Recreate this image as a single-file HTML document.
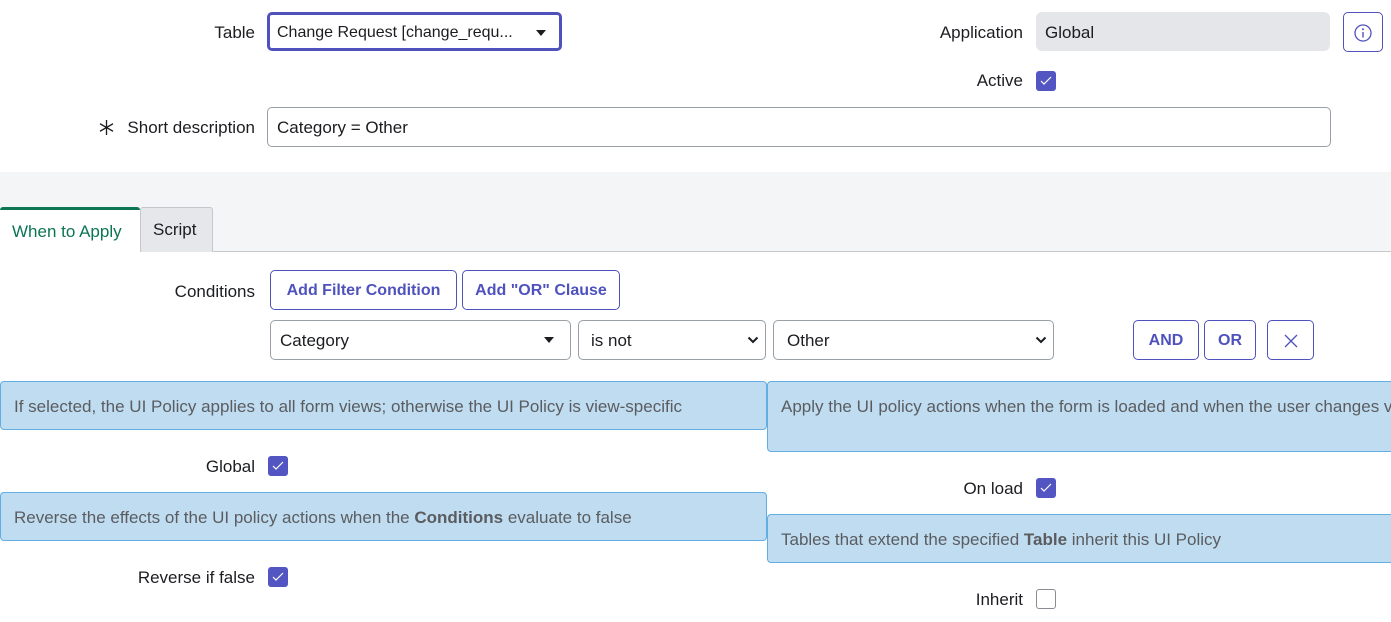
<!DOCTYPE html>
<html><head><meta charset="utf-8">
<style>
*{box-sizing:border-box;margin:0;padding:0}
html,body{width:1391px;height:622px;overflow:hidden;background:#fff;font-family:"Liberation Sans",sans-serif;font-size:17px;color:#1c1d21;letter-spacing:0}
.a{position:absolute}
.lbl{position:absolute;text-align:right;white-space:nowrap;line-height:20px}
.inp{position:absolute;border:1px solid #9aa0a8;border-radius:5px;background:#fff;padding-left:9px;padding-top:2px;display:flex;align-items:center;white-space:nowrap}
.btn{position:absolute;border:1px solid #4f52bd;border-radius:5px;color:#4f52bd;font-weight:bold;font-size:16px;display:flex;align-items:center;justify-content:center;background:#fff;padding-top:1px}
.cb{position:absolute;width:20px;height:20px;border-radius:3px;background:#5356c2}
.cb svg{position:absolute;left:4px;top:5px}
.info{position:absolute;background:#bfdcf0;border:1px solid #62aee3;border-radius:4px;color:#5a5c60;padding-left:13px;white-space:nowrap;overflow:hidden;line-height:20px}
.caret{position:absolute;width:0;height:0;border-left:5px solid transparent;border-right:5px solid transparent;border-top:6px solid #1c1d21}
</style></head><body>

<div class="lbl" style="right:1136px;top:23px">Table</div>
<div class="inp" style="left:267px;top:12px;width:295px;height:39px;border:3px solid #4f52bd;padding-left:7px;font-size:16px">Change Request [change_requ...</div>
<div class="caret" style="left:536px;top:30px"></div>

<div class="lbl" style="right:368px;top:23px">Application</div>
<div class="a" style="left:1036px;top:12px;width:294px;height:39px;background:#e5e6ea;border-radius:6px;padding-left:9px;line-height:41px">Global</div>
<div class="btn" style="left:1343px;top:12px;width:40px;height:40px">
<svg width="18" height="18" viewBox="0 0 18 18"><circle cx="9" cy="9" r="8" fill="none" stroke="#4f52bd" stroke-width="1.3"/><circle cx="9" cy="5.2" r="1" fill="#4f52bd"/><path d="M9 8v5.5" stroke="#4f52bd" stroke-width="1.4"/></svg></div>

<div class="lbl" style="right:368px;top:71px">Active</div>
<div class="cb" style="left:1036px;top:71px"><svg width="12" height="10" viewBox="0 0 12 10"><path d="M1 5l3 3 7-7" fill="none" stroke="#fff" stroke-width="1.2"/></svg></div>

<svg class="a" style="left:98px;top:119px" width="17" height="17" viewBox="0 0 17 17"><path d="M8.5 1v15M2 4.75l13 7.5M15 4.75l-13 7.5" stroke="#1c1d21" stroke-width="1.3"/></svg>
<div class="lbl" style="right:1136px;top:118px">Short description</div>
<div class="inp" style="left:267px;top:107px;width:1064px;height:40px">Category = Other</div>

<div class="a" style="left:0;top:172px;width:1391px;height:80px;background:#f4f5f7"></div>
<div class="a" style="left:0;top:251px;width:1391px;height:1px;background:#c8c9cd"></div>
<div class="a" style="left:0;top:207px;width:140px;height:45px;background:#fff;border-top:3px solid #0b7554;border-radius:3px 3px 0 0;color:#0b7554;line-height:44px;padding-left:12px">When to Apply</div>
<div class="a" style="left:140px;top:207px;width:73px;height:45px;background:#e6e7eb;border:1px solid #c5c7cc;border-bottom:none;border-radius:3px 3px 0 0;line-height:44px;padding-left:12px">Script</div>

<div class="lbl" style="right:1136px;top:282px">Conditions</div>
<div class="btn" style="left:270px;top:270px;width:187px;height:40px">Add Filter Condition</div>
<div class="btn" style="left:462px;top:270px;width:158px;height:40px">Add "OR" Clause</div>

<div class="inp" style="left:270px;top:320px;width:301px;height:40px">Category</div>
<div class="caret" style="left:544px;top:337px"></div>
<div class="inp" style="left:578px;top:320px;width:188px;height:40px;padding-left:12px">is not</div>
<svg class="a" style="left:747px;top:336px" width="12" height="8" viewBox="0 0 12 8"><path d="M1.5 1.5l4.5 4.5 4.5-4.5" fill="none" stroke="#1c1d21" stroke-width="2"/></svg>
<div class="inp" style="left:773px;top:320px;width:281px;height:40px;padding-left:13px">Other</div>
<svg class="a" style="left:1035px;top:336px" width="12" height="8" viewBox="0 0 12 8"><path d="M1.5 1.5l4.5 4.5 4.5-4.5" fill="none" stroke="#1c1d21" stroke-width="2"/></svg>

<div class="btn" style="left:1133px;top:320px;width:66px;height:40px">AND</div>
<div class="btn" style="left:1204px;top:320px;width:52px;height:40px">OR</div>
<div class="btn" style="left:1267px;top:320px;width:47px;height:40px"><svg width="14" height="14" viewBox="0 0 14 14"><path d="M1 1l12 12M13 1L1 13" stroke="#4f52bd" stroke-width="1.3"/></svg></div>

<div class="info" style="left:0;top:381px;width:767px;height:49px;padding-top:15px">If selected, the UI Policy applies to all form views; otherwise the UI Policy is view-specific</div>
<div class="info" style="left:767px;top:381px;width:640px;height:71px;padding-top:15px">Apply the UI policy actions when the form is loaded and when the user changes values on the form</div>

<div class="lbl" style="right:1136px;top:457px">Global</div>
<div class="cb" style="left:268px;top:456px"><svg width="12" height="10" viewBox="0 0 12 10"><path d="M1 5l3 3 7-7" fill="none" stroke="#fff" stroke-width="1.2"/></svg></div>

<div class="lbl" style="right:368px;top:479px">On load</div>
<div class="cb" style="left:1036px;top:478px"><svg width="12" height="10" viewBox="0 0 12 10"><path d="M1 5l3 3 7-7" fill="none" stroke="#fff" stroke-width="1.2"/></svg></div>

<div class="info" style="left:0;top:492px;width:767px;height:49px;padding-top:15px">Reverse the effects of the UI policy actions when the <b>Conditions</b> evaluate to false</div>
<div class="info" style="left:767px;top:514px;width:640px;height:49px;padding-top:15px">Tables that extend the specified <b>Table</b> inherit this UI Policy</div>

<div class="lbl" style="right:1136px;top:568px">Reverse if false</div>
<div class="cb" style="left:268px;top:567px"><svg width="12" height="10" viewBox="0 0 12 10"><path d="M1 5l3 3 7-7" fill="none" stroke="#fff" stroke-width="1.2"/></svg></div>

<div class="lbl" style="right:368px;top:590px">Inherit</div>
<div class="a" style="left:1036px;top:589px;width:20px;height:20px;border:1px solid #8a8d93;border-radius:3px;background:#fff"></div>

</body></html>
